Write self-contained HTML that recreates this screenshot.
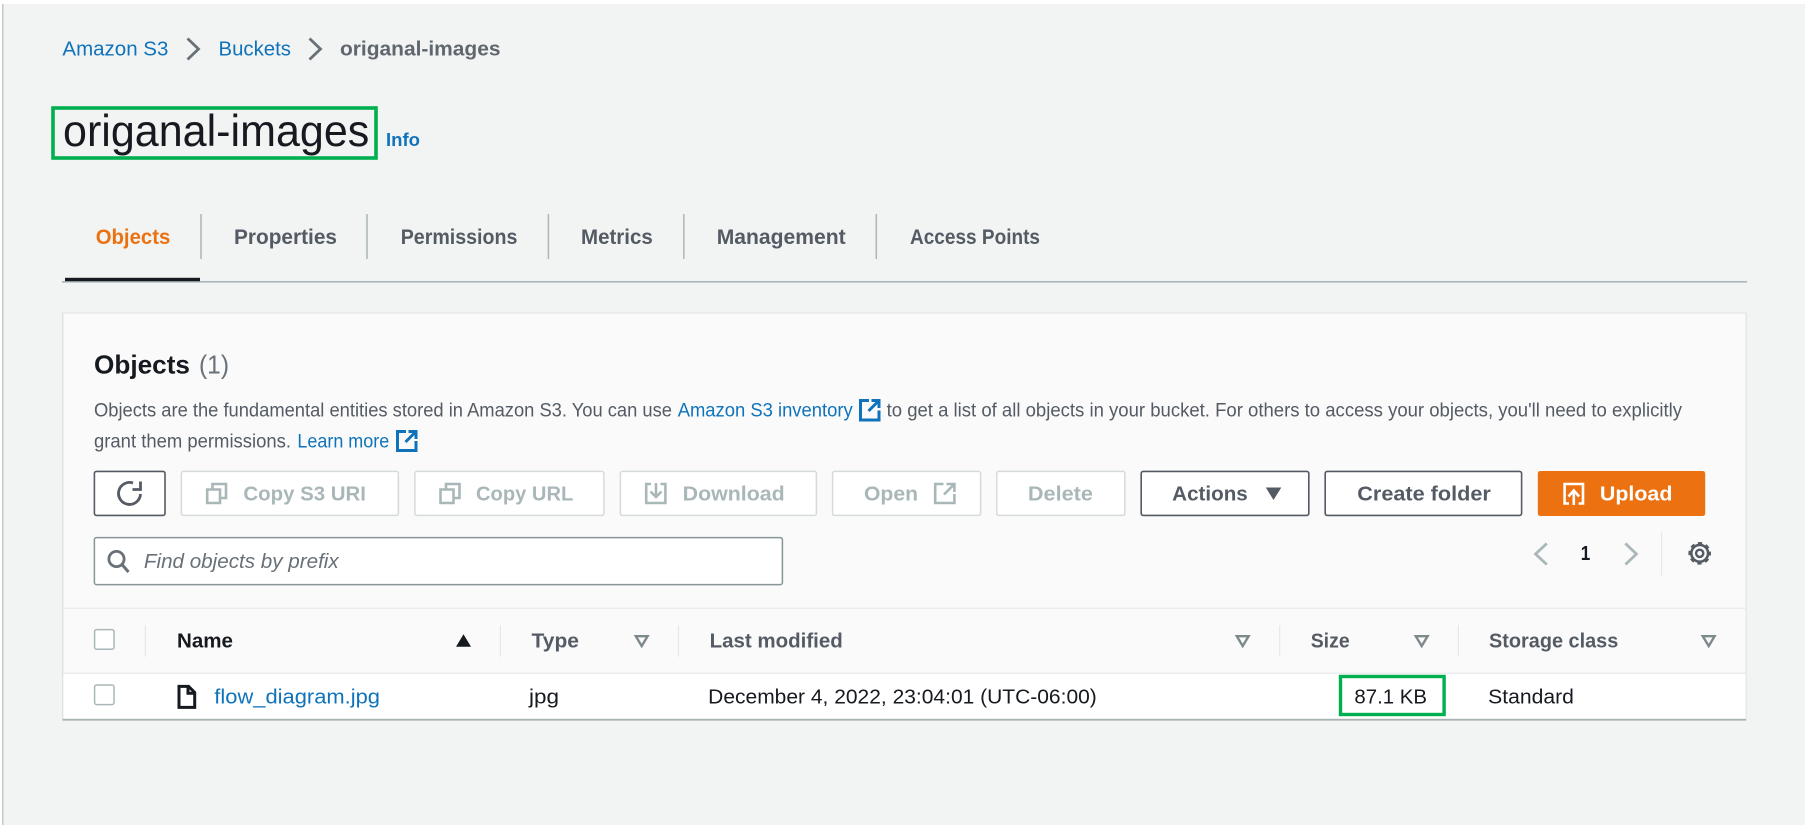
<!DOCTYPE html>
<html lang="en">
<head>
<meta charset="utf-8">
<title>origanal-images - Amazon S3</title>
<style>
html,body{margin:0;padding:0;width:1808px;height:828px;overflow:hidden;background:#fff}
svg{display:block;position:absolute;left:0;top:0;filter:blur(.3px)}
text{font-family:"Liberation Sans",sans-serif;white-space:pre}
.b{font-weight:700}
.lnk{fill:#0f73bb}
.gr{fill:#545b64}
.dk{fill:#16191f}
.dis{fill:#aab7b8;font-weight:700;font-size:20.5px}
.btn{fill:#fff;stroke:#d5dbdb;stroke-width:1.5}
.act{fill:#fff;stroke:#545b64;stroke-width:1.6}
.ic{fill:none;stroke:#aab7b8;stroke-width:2.6}
.ext{fill:none;stroke:#0f73bb;stroke-width:3}
.sep{stroke:#aab7b8;stroke-width:1.5}
.hs{stroke:#e6e9e9;stroke-width:1.2}
.tri{fill:none;stroke:#7d8a8b;stroke-width:2.4;stroke-linejoin:miter}
.cb{fill:#fff;stroke:#aab7b8;stroke-width:1.5}
</style>
</head>
<body>
<svg width="1808" height="828" viewBox="0 0 1808 828" xmlns="http://www.w3.org/2000/svg">
<rect x="0" y="0" width="1808" height="828" fill="#fff"/>
<rect x="2" y="4" width="1803" height="821" fill="#f2f3f3"/>
<rect x="2" y="4" width="1.5" height="821" fill="#c3c9c9"/>

<!-- breadcrumb -->
<text class="lnk" x="62.4" y="55.7" font-size="20.5" textLength="106" lengthAdjust="spacingAndGlyphs">Amazon S3</text>
<path d="M187.5 38.5 L198.5 49 L187.5 59.5" fill="none" stroke="#687078" stroke-width="2.8"/>
<text class="lnk" x="218.5" y="55.7" font-size="20.5" textLength="72.5" lengthAdjust="spacingAndGlyphs">Buckets</text>
<path d="M309.5 38.5 L320.5 49 L309.5 59.5" fill="none" stroke="#687078" stroke-width="2.8"/>
<text class="b" fill="#5f666e" x="340" y="55.7" font-size="20.5" textLength="160.5" lengthAdjust="spacingAndGlyphs">origanal-images</text>

<!-- title -->
<text class="dk" x="63" y="146" font-size="44.5" textLength="306.3" lengthAdjust="spacingAndGlyphs">origanal-images</text>
<rect x="53" y="108" width="323" height="50" fill="none" stroke="#00b050" stroke-width="3.6"/>
<text class="lnk b" x="386" y="146" font-size="18" textLength="34" lengthAdjust="spacingAndGlyphs">Info</text>

<!-- tabs -->
<text class="b" fill="#ec7211" x="95.7" y="244" font-size="21.5" textLength="74.6" lengthAdjust="spacingAndGlyphs">Objects</text>
<text class="b gr" x="234" y="244" font-size="21.5" textLength="103" lengthAdjust="spacingAndGlyphs">Properties</text>
<text class="b gr" x="400.7" y="244" font-size="21.5" textLength="116.7" lengthAdjust="spacingAndGlyphs">Permissions</text>
<text class="b gr" x="581" y="244" font-size="21.5" textLength="71.8" lengthAdjust="spacingAndGlyphs">Metrics</text>
<text class="b gr" x="716.7" y="244" font-size="21.5" textLength="129" lengthAdjust="spacingAndGlyphs">Management</text>
<text class="b gr" x="910" y="244" font-size="21.5" textLength="130" lengthAdjust="spacingAndGlyphs">Access Points</text>
<line class="sep" x1="201" y1="214" x2="201" y2="259"/>
<line class="sep" x1="367" y1="214" x2="367" y2="259"/>
<line class="sep" x1="548.4" y1="214" x2="548.4" y2="259"/>
<line class="sep" x1="683.8" y1="214" x2="683.8" y2="259"/>
<line class="sep" x1="876.3" y1="214" x2="876.3" y2="259"/>
<rect x="62" y="281" width="1685" height="1.6" fill="#aab7b8"/>
<rect x="65" y="277.8" width="135" height="3.4" fill="#16191f"/>

<!-- card -->
<rect x="62" y="312.6" width="1684.6" height="408" fill="#d0d5d5" opacity=".6"/>
<rect x="63.4" y="313.4" width="1682.2" height="406" fill="#fafafa"/>
<rect x="63.4" y="674" width="1682.2" height="45" fill="#fff"/>
<rect x="62.6" y="718.8" width="1683.4" height="1.8" fill="#a9b3b3"/>

<text class="b dk" x="94" y="373.3" font-size="26" textLength="96" lengthAdjust="spacingAndGlyphs">Objects</text>
<text fill="#687078" x="199" y="373.3" font-size="26" textLength="30" lengthAdjust="spacingAndGlyphs">(1)</text>

<text class="gr" x="94" y="416.7" font-size="19" textLength="578" lengthAdjust="spacingAndGlyphs">Objects are the fundamental entities stored in Amazon S3. You can use</text>
<text class="lnk" x="677.7" y="416.7" font-size="19" textLength="175" lengthAdjust="spacingAndGlyphs">Amazon S3 inventory</text>
<path class="ext" d="M869 400.5 H860.5 V420 H879 V410.5 M871.5 400.5 H879 V408 M879 400.5 L868.5 411"/>
<text class="gr" x="886.6" y="416.7" font-size="19" textLength="795.4" lengthAdjust="spacingAndGlyphs">to get a list of all objects in your bucket. For others to access your objects, you'll need to explicitly</text>
<text class="gr" x="94" y="447.3" font-size="19" textLength="197" lengthAdjust="spacingAndGlyphs">grant them permissions.</text>
<text class="lnk" x="297.4" y="447.3" font-size="19" textLength="91.8" lengthAdjust="spacingAndGlyphs">Learn more</text>
<path class="ext" d="M406 431.5 H397.5 V450.5 H416 V441 M408.5 431.5 H416 V439 M416 431.5 L405.5 442"/>

<!-- toolbar buttons -->
<rect class="act" x="94.4" y="471.4" width="70.6" height="44" rx="2"/>
<path d="M133 483 A11 11 0 1 0 140.5 494" fill="none" stroke="#545b64" stroke-width="2.8"/>
<path d="M140.5 481.5 V489.5 H132.5" fill="none" stroke="#545b64" stroke-width="2.8"/>

<rect class="btn" x="181.4" y="471.4" width="217" height="44" rx="2"/>
<path class="ic" d="M207.2 489.5 H220 V503 H207.2 Z M212.5 489.5 V484 H226 V498 H220"/>
<text class="dis" x="243.4" y="500.7" textLength="122.6" lengthAdjust="spacingAndGlyphs">Copy S3 URI</text>

<rect class="btn" x="414.9" y="471.4" width="189" height="44" rx="2"/>
<path class="ic" d="M440.5 489.5 H453.5 V503 H440.5 Z M446 489.5 V484 H459.5 V498 H453.5"/>
<text class="dis" x="476" y="500.7" textLength="97.3" lengthAdjust="spacingAndGlyphs">Copy URL</text>

<rect class="btn" x="620.4" y="471.4" width="196" height="44" rx="2"/>
<path class="ic" d="M651 484 H646.2 V503 H665.4 V484 H660.5 M656 483 V496.5 M650.5 491.5 L656 497 L661.5 491.5"/>
<text class="dis" x="682.7" y="500.7" textLength="102" lengthAdjust="spacingAndGlyphs">Download</text>

<rect class="btn" x="832.6" y="471.4" width="148" height="44" rx="2"/>
<text class="dis" x="864" y="500.7" textLength="54" lengthAdjust="spacingAndGlyphs">Open</text>
<path class="ic" d="M943.5 484 H935.2 V503 H954.4 V494 M946.5 484 H954.4 V492 M954.4 484 L944 494.5"/>

<rect class="btn" x="996.8" y="471.4" width="128" height="44" rx="2"/>
<text class="dis" x="1027.9" y="500.7" textLength="65" lengthAdjust="spacingAndGlyphs">Delete</text>

<rect class="act" x="1141.2" y="471.4" width="167.6" height="44" rx="2"/>
<text class="b gr" x="1172.2" y="500.7" font-size="20.5" textLength="75.6" lengthAdjust="spacingAndGlyphs">Actions</text>
<path d="M1265.8 487.5 H1281.3 L1273.5 500 Z" fill="#545b64"/>

<rect class="act" x="1325.2" y="471.4" width="196.4" height="44" rx="2"/>
<text class="b gr" x="1357.3" y="500.7" font-size="20.5" textLength="133.5" lengthAdjust="spacingAndGlyphs">Create folder</text>

<rect x="1537.8" y="471" width="167.4" height="45" rx="2.5" fill="#ec7211"/>
<path d="M1569 503.5 H1564.6 V484 H1583 V503.5 H1578.6" fill="none" stroke="#fff" stroke-width="2.6"/>
<path d="M1573.8 505 V491.5 M1568.5 496.5 L1573.8 490.5 L1579.1 496.5" fill="none" stroke="#fff" stroke-width="2.6"/>
<text class="b" fill="#fff" x="1599.9" y="500.7" font-size="20.5" textLength="72.5" lengthAdjust="spacingAndGlyphs">Upload</text>

<!-- search -->
<rect x="94.4" y="537.6" width="688" height="47" rx="2" fill="#fff" stroke="#879596" stroke-width="1.5"/>
<circle cx="116.5" cy="559" r="7.6" fill="none" stroke="#687078" stroke-width="2.8"/>
<line x1="122" y1="564.5" x2="128.5" y2="572" stroke="#687078" stroke-width="3"/>
<text fill="#687078" font-style="italic" x="143.9" y="568" font-size="20" textLength="194.8" lengthAdjust="spacingAndGlyphs">Find objects by prefix</text>

<!-- pagination -->
<path d="M1546.8 543.5 L1535.5 554 L1546.8 564.5" fill="none" stroke="#aab7b8" stroke-width="2.8"/>
<text class="b dk" x="1580.8" y="560" font-size="20.5" textLength="9.5" lengthAdjust="spacingAndGlyphs">1</text>
<path d="M1625.4 543.5 L1636.4 554 L1625.4 564.5" fill="none" stroke="#aab7b8" stroke-width="2.8"/>
<line class="hs" x1="1661.5" y1="531.7" x2="1661.5" y2="575.7"/>
<circle cx="1699.7" cy="553.3" r="8.4" fill="none" stroke="#545b64" stroke-width="2.6"/>
<circle cx="1699.7" cy="553.3" r="10" fill="none" stroke="#545b64" stroke-width="2.6" stroke-dasharray="4.2 3.65" stroke-dashoffset="2"/>
<circle cx="1699.7" cy="553.3" r="3.6" fill="none" stroke="#545b64" stroke-width="2.4"/>

<!-- table header -->
<rect x="63.4" y="607.6" width="1682.2" height="1.4" fill="#eaeded"/>
<rect x="63.4" y="672.6" width="1682.2" height="1.6" fill="#eaeded"/>
<rect class="cb" x="94.6" y="629.6" width="19.4" height="19.6" rx="2"/>
<line class="hs" x1="145.3" y1="625" x2="145.3" y2="656.7"/>
<text class="b dk" x="177" y="647.5" font-size="20" textLength="56" lengthAdjust="spacingAndGlyphs">Name</text>
<path d="M456 646.7 L463.5 634.3 L471 646.7 Z" fill="#16191f"/>
<line class="hs" x1="500.4" y1="625" x2="500.4" y2="656.7"/>
<text class="b gr" x="531.5" y="647.5" font-size="20" textLength="47.5" lengthAdjust="spacingAndGlyphs">Type</text>
<path class="tri" d="M635.8 636.2 H647.6 L641.7 646 Z"/>
<line class="hs" x1="678.5" y1="625" x2="678.5" y2="656.7"/>
<text class="b gr" x="709.6" y="647.5" font-size="20" textLength="133.2" lengthAdjust="spacingAndGlyphs">Last modified</text>
<path class="tri" d="M1236.8 636.2 H1248.6 L1242.7 646 Z"/>
<line class="hs" x1="1279.7" y1="625" x2="1279.7" y2="656.7"/>
<text class="b gr" x="1310.7" y="647.5" font-size="20" textLength="39" lengthAdjust="spacingAndGlyphs">Size</text>
<path class="tri" d="M1415.8 636.2 H1427.6 L1421.7 646 Z"/>
<line class="hs" x1="1458.4" y1="625" x2="1458.4" y2="656.7"/>
<text class="b gr" x="1489" y="647.5" font-size="20" textLength="129.3" lengthAdjust="spacingAndGlyphs">Storage class</text>
<path class="tri" d="M1702.8 636.2 H1714.6 L1708.7 646 Z"/>

<!-- row -->
<rect class="cb" x="94.6" y="685" width="19.4" height="19.6" rx="2"/>
<path d="M179 686.4 H188.6 L194.7 692.5 V707.4 H179 Z M188 686 V693.2 H195" fill="none" stroke="#16191f" stroke-width="3"/>
<text class="lnk" x="214.3" y="703.6" font-size="20.5" textLength="165.7" lengthAdjust="spacingAndGlyphs">flow_diagram.jpg</text>
<text class="dk" x="529" y="703.6" font-size="20.5" textLength="30" lengthAdjust="spacingAndGlyphs">jpg</text>
<text class="dk" x="708.2" y="703.3" font-size="20.5" textLength="388.6" lengthAdjust="spacingAndGlyphs">December 4, 2022, 23:04:01 (UTC-06:00)</text>
<text class="dk" x="1354.4" y="703.3" font-size="20.5" textLength="72.6" lengthAdjust="spacingAndGlyphs">87.1 KB</text>
<rect x="1340.5" y="676.5" width="103.6" height="38" fill="none" stroke="#00b050" stroke-width="3.4"/>
<text class="dk" x="1488.2" y="703.3" font-size="20.5" textLength="85.7" lengthAdjust="spacingAndGlyphs">Standard</text>
</svg>
</body>
</html>
